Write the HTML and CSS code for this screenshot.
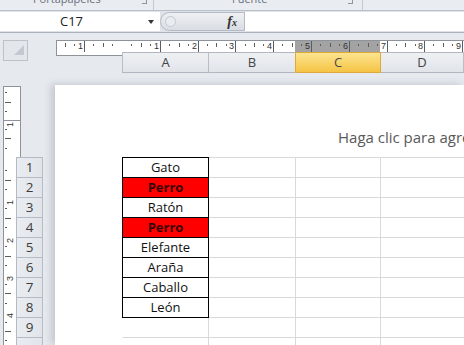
FILE: index.html
```html
<!DOCTYPE html>
<html>
<head>
<meta charset="utf-8">
<title>Libro1 - Excel</title>
<link rel="stylesheet" href="styles.css">
</head>
<body>

  <div class="ribbon">
    <div class="group g1"><span class="glabel">Portapapeles</span><span class="launch"></span></div>
    <div class="group g2"><span class="glabel">Fuente</span><span class="launch"></span></div>
    <div class="group g3"></div>
  </div>

  <div class="fbar">
    <div class="namebox"><span class="ref">C17</span><span class="drop"></span></div>
    <div class="fxzone"><span class="grip"></span><span class="fx">f<span class="fxsub">x</span></span></div>
    <div class="finput"></div>
  </div>

  <div class="sheettop">
    <div class="corner">
      <svg width="23" height="19" viewBox="0 0 23 19"><polygon points="20,4 20,14 10,14" fill="#c4c9d1"/></svg>
    </div>
    <div class="hruler">
      <svg width="408" height="12" viewBox="0 0 408 12">
        <rect width="408" height="12" fill="#fff"/>
        <rect x="239" y="0" width="85" height="12" fill="#a3a3a3"/>
        <path d="M0 .5H408M.5 0V12" stroke="#8e939b"/>
        <path stroke="#5d5d5d" d="M18.5 4v2M37.5 4v2M56.5 4v2M75.5 4v2M94.5 4v2M113.5 4v2M132.5 4v2M151.5 4v2M170.5 4v2M189.5 4v2M207.5 4v2M226.5 4v2M245.5 4v2M264.5 4v2M283.5 4v2M302.5 4v2M321.5 4v2M340.5 4v2M359.5 4v2M377.5 4v2M396.5 4v2"/>
        <path stroke="#5d5d5d" d="M9.5 3v4M47.5 3v4M85.5 3v4M123.5 3v4M160.5 3v4M198.5 3v4M236.5 3v4M274.5 3v4M312.5 3v4M349.5 3v4M387.5 3v4"/>
        <path stroke="#5d5d5d" d="M28.5 1v11M104.5 1v11M142.5 1v11M179.5 1v11M217.5 1v11M255.5 1v11M293.5 1v11M331.5 1v11M368.5 1v11M406.5 1v11"/>
        <g font-family="Liberation Sans, sans-serif" font-size="9" fill="#333" text-anchor="end">
          <text x="27" y="9">1</text>
          <text x="103" y="9">1</text>
          <text x="141" y="9">2</text>
          <text x="178" y="9">3</text>
          <text x="216" y="9">4</text>
          <text x="254" y="9">5</text>
          <text x="292" y="9">6</text>
          <text x="330" y="9">7</text>
          <text x="367" y="9">8</text>
          <text x="405" y="9">9</text>
        </g>
      </svg>
    </div>
    <div class="rulerfoot"></div>
    <div class="colhead first">A</div>
    <div class="colhead">B</div>
    <div class="colhead sel">C</div>
    <div class="colhead">D</div>
  </div>

  <div class="sheetbody">
    <div class="side">
      <div class="vruler">
        <svg width="18" height="259" viewBox="0 0 18 259">
          <rect width="18" height="259" fill="#fff"/>
          <path d="M0 .5H18M.5 0V259M17.5 0V259M0 34.5H18" stroke="#8e939b"/>
          <path stroke="#5d5d5d" d="M2 6.5h2M2 25.5h2M2 43.5h2M2 62.5h2M2 84.5h2M2 103.5h2M2 122.5h2M2 141.5h2M2 160.5h2M2 179.5h2M2 198.5h2M2 217.5h2M2 236.5h2M2 254.5h2"/>
          <path stroke="#5d5d5d" d="M2 16.5h6M2 52.5h6M2 94.5h6M2 132.5h6M2 170.5h6M2 207.5h6M2 245.5h6"/>
          <g font-family="Liberation Sans, sans-serif" font-size="9" fill="#333" text-anchor="end">
            <text transform="translate(10 36) rotate(-90)">1</text>
            <text transform="translate(10 114) rotate(-90)">1</text>
            <text transform="translate(10 152) rotate(-90)">2</text>
            <text transform="translate(10 190) rotate(-90)">3</text>
            <text transform="translate(10 227) rotate(-90)">4</text>
          </g>
        </svg>
      </div>
      <div class="rowheads">
        <div class="rowhead">1</div>
        <div class="rowhead">2</div>
        <div class="rowhead">3</div>
        <div class="rowhead">4</div>
        <div class="rowhead">5</div>
        <div class="rowhead">6</div>
        <div class="rowhead">7</div>
        <div class="rowhead">8</div>
        <div class="rowhead">9</div>
        <div class="rowhead"></div>
      </div>
    </div>

    <div class="page">
      <div class="pagehead">Haga clic para agregar encabezado</div>
      <div class="cells">
        <div class="cell a d">Gato</div><div class="cell"></div><div class="cell"></div><div class="cell"></div>
        <div class="cell a d red">Perro</div><div class="cell"></div><div class="cell"></div><div class="cell"></div>
        <div class="cell a d">Ratón</div><div class="cell"></div><div class="cell"></div><div class="cell"></div>
        <div class="cell a d red">Perro</div><div class="cell"></div><div class="cell"></div><div class="cell"></div>
        <div class="cell a d">Elefante</div><div class="cell"></div><div class="cell"></div><div class="cell"></div>
        <div class="cell a d">Araña</div><div class="cell"></div><div class="cell"></div><div class="cell"></div>
        <div class="cell a d">Caballo</div><div class="cell"></div><div class="cell"></div><div class="cell"></div>
        <div class="cell a d">León</div><div class="cell"></div><div class="cell"></div><div class="cell"></div>
        <div class="cell a"></div><div class="cell"></div><div class="cell"></div><div class="cell"></div>
        <div class="cell a"></div><div class="cell"></div><div class="cell"></div><div class="cell"></div>
      </div>
    </div>
  </div>

</body>
</html>
```

FILE: styles.css
```css
*, :after, :before { box-sizing: border-box; }

html, body {
  margin: 0;
  padding: 0;
}

body {
  width: 464px;
  height: 345px;
  overflow: hidden;
  background: #e6e9ee;
  font-family: "Open Sans", "Noto Sans", sans-serif;
  color: #333;
}

/* ribbon group captions, cut off at the top */
.ribbon {
  display: flex;
  height: 11px;
  overflow: hidden;
  background: #e9edf2;
  border-bottom: 1px solid #b9c0ca;
}

.group {
  display: flex;
  height: 10px;
  border-right: 1px solid #c3c9d2;
}

.g1 { width: 154px; }
.g2 { width: 209px; }
.g3 { flex: 1; border-right: none; }

.glabel {
  font-size: 11px;
  line-height: 11px;
  margin-top: -7px;
  color: #6b7079;
  white-space: nowrap;
}

.g1 .glabel { padding-left: 33px; }
.g2 .glabel { padding-left: 78px; }

.launch {
  width: 5px;
  height: 4px;
  margin-left: auto;
  border-right: 1px solid #8f959e;
  border-bottom: 1px solid #8f959e;
}

.g1 .launch { margin-right: 6px; }
.g2 .launch { margin-right: 9px; }

/* formula bar */
.fbar {
  display: flex;
  height: 22px;
  padding: 1px 0;
  background: #dfe3e9;
  border-bottom: 1px solid #a9b1bb;
}

.namebox {
  width: 160px;
  background: #fff;
  display: flex;
  align-items: center;
}

.ref {
  padding-left: 60px;
  font-size: 13px;
  line-height: 19px;
  color: #222;
}

.drop {
  margin-left: auto;
  margin-right: 6px;
  width: 0;
  height: 0;
  border-left: 3px solid transparent;
  border-right: 3px solid transparent;
  border-top: 4px solid #333;
}

.fxzone {
  width: 85px;
  display: flex;
  align-items: center;
  background: linear-gradient(#eef0f3, #d9dde3);
  border: 1px solid #b4bbc4;
  border-radius: 10px 0 0 10px;
}

.grip {
  width: 11px;
  height: 11px;
  margin-left: 4px;
  border-radius: 50%;
  background: #e9ecf0;
  border: 1px solid #c5cad2;
}

.fx {
  margin-left: auto;
  margin-right: 7px;
  font-family: "Liberation Serif", serif;
  font-style: italic;
  font-weight: bold;
  font-size: 14px;
  line-height: 17px;
  color: #333;
}

.fxsub {
  font-size: 10px;
}

.finput {
  flex: 1;
  background: #fff;
}

/* rulers and column headers */
.sheettop {
  display: grid;
  grid-template-columns: 56px 66px 87px 87px 85px 1fr;
  grid-template-rows: 12px 21px;
  padding-top: 7px;
  margin-bottom: 12px;
}

.corner {
  grid-column: 1;
  grid-row: 1 / 3;
  margin-left: 3px;
  width: 25px;
  height: 21px;
  background: #e3e7ec;
  border: 1px solid #bcc2ca;
}

.corner svg { display: block; }

.hruler {
  grid-column: 2 / -1;
  grid-row: 1;
  overflow: hidden;
}

.hruler svg { display: block; }

.rulerfoot {
  grid-column: 2;
  grid-row: 2;
  height: 4px;
  background: #fff;
  border-left: 1px solid #8e939b;
  border-bottom: 1px solid #8e939b;
}

.colhead {
  grid-row: 2;
  background: linear-gradient(#eef0f3, #e1e5ea);
  border-top: 1px solid #b1b7c0;
  border-bottom: 1px solid #b1b7c0;
  border-right: 1px solid #b9bec6;
  text-align: center;
  font-size: 13px;
  line-height: 19px;
  color: #444;
}

.colhead.first {
  grid-column: 3;
  border-left: 1px solid #b9bec6;
}

.colhead.sel {
  margin-left: -1px;
  background: linear-gradient(#fce48f, #f5c445);
  border: 1px solid #e0a93c;
  color: #4a4a4a;
}

/* side ruler, row headers and the page */
.sheetbody {
  display: flex;
  height: 260px;
}

.side {
  width: 55px;
  flex: none;
  display: grid;
  grid-template-columns: 3px 13px 5px 22px 12px;
  grid-template-rows: 1px 71px 1fr;
}

.vruler {
  grid-column: 2 / 4;
  grid-row: 2 / 4;
}

.vruler svg { display: block; }

.rowheads {
  grid-column: 3 / 5;
  grid-row: 3;
  position: relative;
  z-index: 2;
}

.rowhead {
  height: 20px;
  background: linear-gradient(90deg, #e9ecf0, #e1e5ea);
  border-left: 1px solid #b5bbc4;
  border-right: 1px solid #b5bbc4;
  border-bottom: 1px solid #b5bbc4;
  text-align: center;
  font-size: 13.5px;
  line-height: 19px;
  color: #3c3c3c;
}

.rowhead:first-child {
  height: 21px;
  border-top: 1px solid #b5bbc4;
}

.page {
  flex: 1;
  min-width: 0;
  background: #fff;
  overflow: hidden;
  box-shadow: -4px -1px 7px rgba(60, 70, 85, 0.2);
  position: relative;
  z-index: 1;
}

.pagehead {
  padding: 43px 0 0 283px;
  height: 61px;
  font-size: 15px;
  line-height: 18px;
  color: #595959;
  white-space: nowrap;
}

.cells {
  margin-top: 11px;
  margin-left: 67px;
  display: grid;
  grid-template-columns: 87px 87px 85px 87px;
}

.cell {
  height: 20px;
  border-right: 1px solid #d9d9d9;
  border-bottom: 1px solid #d9d9d9;
  text-align: center;
  font-size: 13px;
  line-height: 19px;
  color: #111;
  white-space: nowrap;
}

.cell:nth-child(-n+4) {
  height: 21px;
  border-top: 1px solid #d9d9d9;
}

.cell.a {
  border-left: 1px solid #fff;
}

.cell.d {
  border-left-color: #000;
  border-right-color: #000;
  border-bottom-color: #000;
}

.cell.d:first-child {
  border-top-color: #000;
}

.cell.red {
  background: #ff0000;
  font-weight: bold;
  color: #3a0000;
}
```
